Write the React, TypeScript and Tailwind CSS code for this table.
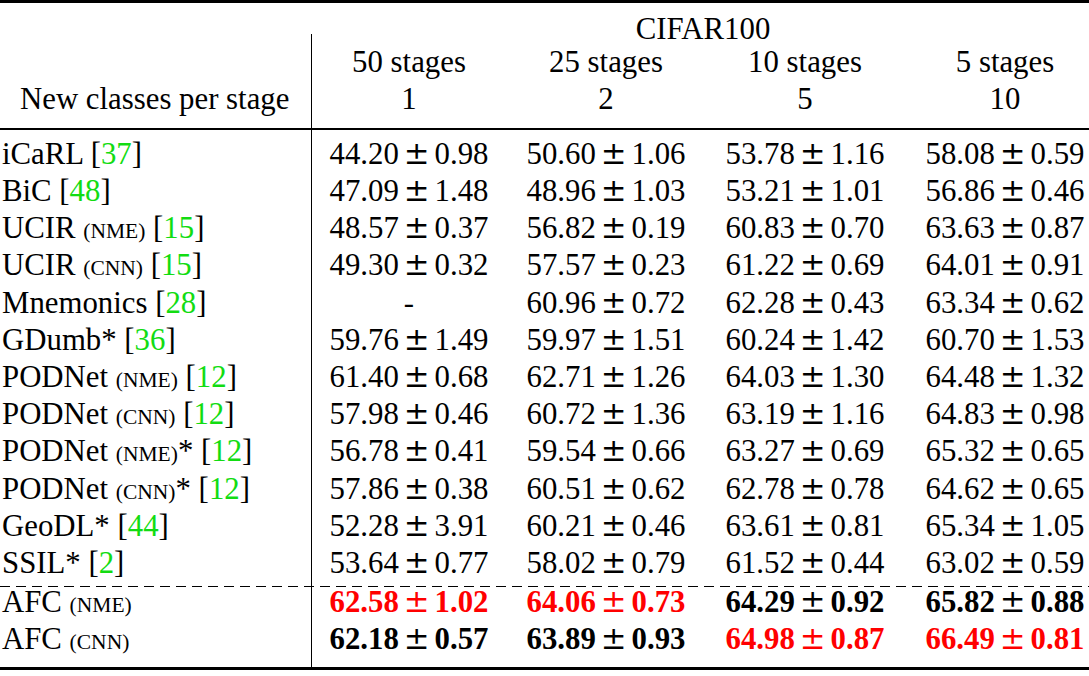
import React from "react";

type Row = { name: React.ReactNode; vals: string[]; styles?: ("n" | "b" | "r")[] };

const Cite = ({ n }: { n: string }) => (
  <span>
    [<span className="text-[#12dc12]">{n}</span>]
  </span>
);

const Sm = ({ t }: { t: string }) => <span className="text-[21.5px] leading-[0]">{t}</span>;

const rows: Row[] = [
  { name: <>iCaRL <Cite n="37" /></>, vals: ["44.20 ± 0.98", "50.60 ± 1.06", "53.78 ± 1.16", "58.08 ± 0.59"] },
  { name: <>BiC <Cite n="48" /></>, vals: ["47.09 ± 1.48", "48.96 ± 1.03", "53.21 ± 1.01", "56.86 ± 0.46"] },
  { name: <>UCIR <Sm t="(NME)" /> <Cite n="15" /></>, vals: ["48.57 ± 0.37", "56.82 ± 0.19", "60.83 ± 0.70", "63.63 ± 0.87"] },
  { name: <>UCIR <Sm t="(CNN)" /> <Cite n="15" /></>, vals: ["49.30 ± 0.32", "57.57 ± 0.23", "61.22 ± 0.69", "64.01 ± 0.91"] },
  { name: <>Mnemonics <Cite n="28" /></>, vals: ["-", "60.96 ± 0.72", "62.28 ± 0.43", "63.34 ± 0.62"] },
  { name: <>GDumb* <Cite n="36" /></>, vals: ["59.76 ± 1.49", "59.97 ± 1.51", "60.24 ± 1.42", "60.70 ± 1.53"] },
  { name: <>PODNet <Sm t="(NME)" /> <Cite n="12" /></>, vals: ["61.40 ± 0.68", "62.71 ± 1.26", "64.03 ± 1.30", "64.48 ± 1.32"] },
  { name: <>PODNet <Sm t="(CNN)" /> <Cite n="12" /></>, vals: ["57.98 ± 0.46", "60.72 ± 1.36", "63.19 ± 1.16", "64.83 ± 0.98"] },
  { name: <>PODNet <Sm t="(NME)" />* <Cite n="12" /></>, vals: ["56.78 ± 0.41", "59.54 ± 0.66", "63.27 ± 0.69", "65.32 ± 0.65"] },
  { name: <>PODNet <Sm t="(CNN)" />* <Cite n="12" /></>, vals: ["57.86 ± 0.38", "60.51 ± 0.62", "62.78 ± 0.78", "64.62 ± 0.65"] },
  { name: <>GeoDL* <Cite n="44" /></>, vals: ["52.28 ± 3.91", "60.21 ± 0.46", "63.61 ± 0.81", "65.34 ± 1.05"] },
  { name: <>SSIL* <Cite n="2" /></>, vals: ["53.64 ± 0.77", "58.02 ± 0.79", "61.52 ± 0.44", "63.02 ± 0.59"] },
];

const afc: Row[] = [
  { name: <>AFC <Sm t="(NME)" /></>, vals: ["62.58 ± 1.02", "64.06 ± 0.73", "64.29 ± 0.92", "65.82 ± 0.88"], styles: ["r", "r", "b", "b"] },
  { name: <>AFC <Sm t="(CNN)" /></>, vals: ["62.18 ± 0.57", "63.89 ± 0.93", "64.98 ± 0.87", "66.49 ± 0.81"], styles: ["b", "b", "r", "r"] },
];

const Val = ({ v, s }: { v: string; s?: "n" | "b" | "r" }) => {
  if (!v.includes("±")) return <span>{v}</span>;
  const [a, b] = v.split(" ± ");
  const cls = s === "r" ? "font-bold text-[#f00]" : s === "b" ? "font-bold" : "";
  return (
    <span className={cls}>
      {a}
      <span className="font-normal leading-[0] mx-[5px] font-['DejaVu_Serif',serif]">±</span>
      {b}
    </span>
  );
};

const grid = "grid grid-cols-[311px_196px_198px_200px_200px]";

const DataRow = ({ r, h }: { r: Row; h: string }) => (
  <div className={`${grid} ${h}`}>
    <div className="pl-[2px] whitespace-nowrap">{r.name}</div>
    {r.vals.map((v, i) => (
      <div key={i} className="text-center whitespace-nowrap">
        <Val v={v} s={r.styles?.[i]} />
      </div>
    ))}
  </div>
);

const dash = "h-[1px] bg-[image:repeating-linear-gradient(to_right,#000_0px,#000_10px,transparent_10px,transparent_16px)]";

export default function App() {
  return (
    <div className="w-[1089px] h-[676px] overflow-hidden bg-white text-black font-['Liberation_Serif','Times_New_Roman',serif] text-[30.8px]">
      <div className="h-[2.5px] bg-black" />
      <div className={`${grid} pt-[21px] pb-[0.5px] leading-[10px]`}>
        <div />
        <div className="col-span-4 text-center pr-[10px]">CIFAR100</div>
      </div>
      <div className="bg-[image:linear-gradient(to_right,transparent_311px,#000_311px,#000_312px,transparent_312px)]">
        <div className="pt-[10px] pb-[10.2px] leading-[37px]">
          <div className={`${grid} h-[37px]`}>
            <div />
            <div className="text-center">50 stages</div>
            <div className="text-center">25 stages</div>
            <div className="text-center">10 stages</div>
            <div className="text-center">5 stages</div>
          </div>
          <div className={`${grid} h-[37px]`}>
            <div className="pl-[20px] whitespace-nowrap">New classes per stage</div>
            <div className="text-center">1</div>
            <div className="text-center">2</div>
            <div className="text-center">5</div>
            <div className="text-center">10</div>
          </div>
        </div>
        <div className="h-[1.5px] bg-black" />
        <div className="pt-[6.2px] leading-[37.2px]">
          {rows.map((r, i) => (
            <DataRow key={i} r={r} h="h-[37.2px]" />
          ))}
        </div>
        <div className="h-[5px] flex flex-col justify-end">
          <div className={dash} />
        </div>
        <div className="pb-[3.5px] leading-[30px]">
          <DataRow r={afc[0]} h="h-[30px]" />
        </div>
        <div className="pb-[9.4px] leading-[37.2px]">
          <DataRow r={afc[1]} h="h-[37.2px]" />
        </div>
      </div>
      <div className="h-[2.5px] bg-black" />
    </div>
  );
}
